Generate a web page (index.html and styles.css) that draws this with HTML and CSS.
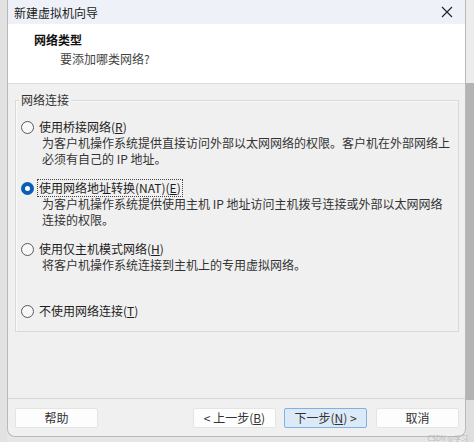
FILE: index.html
```html
<!DOCTYPE html>
<html lang="zh-CN">
<head>
    <meta charset="UTF-8">
    <meta name="viewport" content="width=device-width, initial-scale=1.0">
    <title>新建虚拟机向导</title>
    <link rel="stylesheet" href="styles.css">
</head>
<body>
    <div class="screen">
        <div class="edge"></div>
        <div class="window">
            <div class="titlebar">
                <span>新建虚拟机向导</span>
                <svg class="close" width="12" height="12" viewBox="0 0 12 12">
                    <path d="M1 1 L11 11 M11 1 L1 11" stroke="#222" stroke-width="1.1" fill="none"/>
                </svg>
            </div>

            <div class="header">
                <div class="header-title">网络类型</div>
                <div class="header-sub">要添加哪类网络?</div>
            </div>

            <div class="content">
                <div class="group">
                    <div class="group-title">网络连接</div>

                    <div class="option">
                        <div class="radio-row">
                            <span class="radio"></span>
                            <span class="label">使用桥接网络(<u>R</u>)</span>
                        </div>
                        <div class="desc">为客户机操作系统提供直接访问外部以太网网络的权限。客户机在外部网络上<br>必须有自己的 IP 地址。</div>
                    </div>

                    <div class="option">
                        <div class="radio-row">
                            <span class="radio checked"></span>
                            <span class="label focused">使用网络地址转换(NAT)(<u>E</u>)</span>
                        </div>
                        <div class="desc">为客户机操作系统提供使用主机 IP 地址访问主机拨号连接或外部以太网网络<br>连接的权限。</div>
                    </div>

                    <div class="option">
                        <div class="radio-row">
                            <span class="radio"></span>
                            <span class="label">使用仅主机模式网络(<u>H</u>)</span>
                        </div>
                        <div class="desc">将客户机操作系统连接到主机上的专用虚拟网络。</div>
                    </div>

                    <div class="option last">
                        <div class="radio-row">
                            <span class="radio"></span>
                            <span class="label">不使用网络连接(<u>T</u>)</span>
                        </div>
                    </div>
                </div>
            </div>

            <div class="footer">
                <button class="btn">帮助</button>
                <button class="btn back">&lt; 上一步(<u>B</u>)</button>
                <button class="btn next">下一步(<u>N</u>) &gt;</button>
                <button class="btn cancel">取消</button>
            </div>
        </div>
        <div class="rail"></div>
    </div>
    <div class="watermark">CSDN @学习</div>
</body>
</html>
```

FILE: styles.css
```css
* {
    box-sizing: border-box;
}
body {
    margin: 0;
    font-family: "Noto Sans CJK SC", "Noto Sans", sans-serif;
    font-size: 12px;
    color: #222;
    background: #e6e6e6;
    position: relative;
    width: 474px;
    height: 442px;
    overflow: hidden;
}
.screen {
    display: flex;
    align-items: flex-start;
}
.edge {
    width: 7px;
    height: 442px;
    background: #e2e2e2;
}
.rail {
    width: 8px;
    height: 442px;
    background: linear-gradient(#ececec 0 83px, #b4b4b4 83px 400px, #dedede 400px);
}
.window {
    width: 459px;
    height: 437px;
    border: 1px solid #b9b9b9;
    border-top: none;
    border-radius: 0 0 8px 8px;
    background: #f0f0f0;
    display: flex;
    flex-direction: column;
    overflow: hidden;
}
.titlebar {
    height: 24px;
    background: #eef1f8;
    display: flex;
    align-items: center;
    justify-content: space-between;
    padding: 0 12px 0 6px;
    font-size: 12px;
    color: #1a1a1a;
}
.close {
    display: block;
}
.header {
    height: 60px;
    background: #fff;
    border-bottom: 1px solid #dcdcdc;
    padding-top: 8px;
    line-height: 16px;
}
.header-title {
    font-weight: bold;
    padding-left: 26px;
    color: #111;
}
.header-sub {
    margin-top: 3px;
    padding-left: 52px;
    color: #444;
}
.content {
    height: 314px;
    padding-top: 16px;
}
.group {
    margin: 0 6px 0 7px;
    border: 1px solid #d9d9d9;
    box-shadow: inset 1px 1px 0 #fafafa;
    padding: 0 0 12px 5px;
    line-height: 16px;
}
.group-title {
    width: max-content;
    margin: -9px 0 0 -2px;
    padding: 0 2px;
    background: #f0f0f0;
    color: #333;
}
.option {
    margin-top: 11px;
}
.option + .option {
    margin-top: 13px;
}
.option.last {
    margin-top: 30px;
}
.radio-row {
    display: flex;
    align-items: center;
    height: 16px;
}
.radio {
    width: 13px;
    height: 13px;
    border: 1px solid #5a5a5a;
    border-radius: 50%;
    background: #f7f7f7;
    flex-shrink: 0;
}
.radio.checked {
    border: 4px solid #0a5eb5;
    background: #fff;
}
.label {
    margin-left: 3px;
    padding: 0 1px;
    border: 1px dotted transparent;
    color: #1e1e1e;
    white-space: nowrap;
}
.label.focused {
    border-color: #444;
}
.desc {
    padding-left: 21px;
    white-space: nowrap;
    color: #333;
}
.footer {
    height: 38px;
    border-top: 1px solid #d6d6d6;
    display: flex;
    padding: 9px 6px 0 7px;
}
.btn {
    width: 83px;
    height: 20px;
    font-family: inherit;
    font-size: 12px;
    line-height: 16px;
    color: #333;
    background: #fdfdfd;
    border: 1px solid #e4e4e4;
    border-radius: 2px;
    padding: 0;
}
.back {
    margin-left: auto;
}
.next {
    margin-left: 8px;
    background: #dceaf8;
    border-color: #7fb1e4;
}
.cancel {
    margin-left: 9px;
}
.watermark {
    position: absolute;
    right: 6px;
    bottom: 0;
    font-size: 7px;
    line-height: 8px;
    color: #b8b8b8;
}
```
